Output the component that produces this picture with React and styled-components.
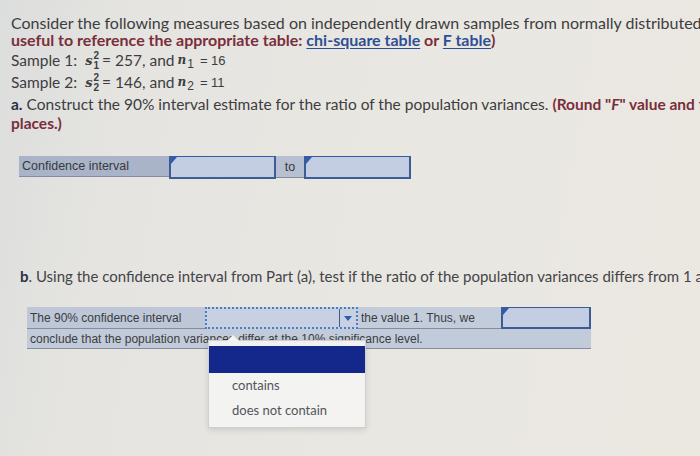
import React from "react";
import styled, { createGlobalStyle } from "styled-components";

const Global = createGlobalStyle`
  html, body { margin: 0; padding: 0; }
  body { background: #e7e5e0; }
`;

const Page = styled.div`
  width: 700px;
  height: 456px;
  overflow: hidden;
  position: relative;
  background: linear-gradient(100deg, #dcdedd 0%, #e5e4e0 18%, #e9e7e2 55%, #ebe8e2 100%);
  font-family: Lato, "Open Sans", sans-serif;
  color: #3d3d3f;
`;

const Question = styled.div`
  padding: 14px 0 0 11px;
  font-size: 16px;
  white-space: nowrap;
`;

const Line = styled.div`
  height: ${(p) => p.$h}px;
  line-height: ${(p) => p.$h}px;
  font-size: ${(p) => p.$fs || 16}px;
  display: flex;
  align-items: center;
`;

const Maroon = styled.span`
  font-weight: 700;
  color: #7a2e3b;
  white-space: pre;
`;

const Strong = styled.span`
  font-weight: 700;
  color: #2f3145;
`;

const Link = styled.span`
  font-weight: 700;
  color: #2f4f95;
  text-decoration: underline;
  text-underline-offset: 2px;
`;

const Plain = styled.span`
  white-space: pre;
`;

const Var = styled.span`
  display: inline-flex;
  align-items: center;
  font-family: "DejaVu Serif", serif;
  font-style: italic;
  font-weight: 700;
  font-size: ${(p) => p.$size || 13}px;
  margin: 0 ${(p) => p.$mr ?? 3}px 0 ${(p) => p.$ml ?? 4}px;
`;

const Scripts = styled.span`
  display: inline-flex;
  flex-direction: column;
  font-family: "Liberation Sans", sans-serif;
  font-style: normal;
  font-weight: 700;
  font-size: 10px;
  line-height: 10px;
  margin-left: 1px;
`;

const Sub = styled.span`
  font-family: "Liberation Sans", sans-serif;
  font-style: normal;
  font-weight: 400;
  font-size: 12px;
  position: relative;
  top: 4px;
  margin-left: 1px;
`;

const MathNum = styled.span`
  font-family: "Liberation Sans", sans-serif;
  font-size: 13px;
  white-space: pre;
  margin-left: 5px;
`;

const Table1 = styled.div`
  display: flex;
  align-items: flex-start;
  margin: 25px 0 0 19px;
  font-family: "Liberation Sans", Arial, sans-serif;
  font-size: 12.5px;
  color: #38393c;
`;

const Cell = styled.div`
  width: ${(p) => p.$w}px;
  height: ${(p) => p.$h || 21}px;
  background: ${(p) => p.$bg || "#a9b4c8"};
  border-bottom: 1px solid #858d9c;
  box-sizing: border-box;
  display: flex;
  align-items: center;
  justify-content: ${(p) => (p.$center ? "center" : "flex-start")};
  padding-left: ${(p) => (p.$center ? 0 : p.$pad ?? 3)}px;
  white-space: nowrap;
  overflow: hidden;
`;

const Input = styled.div`
  position: relative;
  width: ${(p) => p.$w}px;
  height: ${(p) => p.$h || 23}px;
  box-sizing: border-box;
  border: 2px solid #3d5b95;
  border-top-width: 1px;
  background: #c4cee3;
  &::before {
    content: "";
    position: absolute;
    left: 0;
    top: 0;
    border-top: 7px solid #2f5bb0;
    border-right: 6px solid transparent;
  }
`;

const PartB = styled.div`
  margin: 87px 0 0 20px;
  font-size: 15px;
  line-height: 20px;
  white-space: nowrap;
  color: #444448;
`;

const Table2 = styled.div`
  position: relative;
  margin: 21px 0 0 27px;
  width: 564px;
  font-family: "Liberation Sans", Arial, sans-serif;
  font-size: 12px;
  color: #3b3c40;
`;

const Row = styled.div`
  display: flex;
  align-items: flex-start;
`;

const Select = styled.div`
  width: ${(p) => p.$w}px;
  height: 22px;
  box-sizing: border-box;
  border: 2px dotted #4b7cc6;
  background: #c7d1e2;
  display: flex;
  justify-content: flex-end;
  align-items: stretch;
`;

const SelectArrow = styled.div`
  width: 16px;
  border-left: 1px solid #3d5b95;
  display: flex;
  align-items: center;
  justify-content: center;
  &::after {
    content: "";
    border-top: 5px solid #2f5bb0;
    border-left: 4px solid transparent;
    border-right: 4px solid transparent;
  }
`;

const Menu = styled.div`
  position: absolute;
  left: 181px;
  top: 33px;
  width: 158px;
  height: 88px;
  box-sizing: border-box;
  background: rgba(244, 244, 242, 0.96);
  border: 1px solid #cfcfcf;
  box-shadow: 0 2px 6px rgba(0, 0, 0, 0.12);
  padding-top: 5px;
  font-family: Lato, "Open Sans", sans-serif;
  font-size: 13px;
  color: #545458;
  &::before {
    content: "";
    position: absolute;
    left: 18px;
    top: -6px;
    border-bottom: 6px solid #f4f4f2;
    border-left: 6px solid transparent;
    border-right: 6px solid transparent;
  }
`;

const Highlight = styled.div`
  height: 27px;
  background: #14288c;
`;

const Option = styled.div`
  height: 25px;
  line-height: 25px;
  padding-left: 23px;
  white-space: nowrap;
`;

export default function App() {
  return (
    <Page>
      <Global />
      <Question>
        <Line $h={17}>
          <Plain>Consider the following measures based on independently drawn samples from normally distributed populations. (You may find it</Plain>
        </Line>
        <Line $h={18}>
          <Maroon>useful to reference the appropriate table: </Maroon>
          <Link>chi-square table</Link>
          <Maroon> or </Maroon>
          <Link>F table</Link>
          <Maroon>)</Maroon>
        </Line>
        <Line $h={23} $fs={15.5}>
          <Plain>Sample 1:</Plain>
          <Var $ml={8}>
            s
            <Scripts>
              <span>2</span>
              <span>1</span>
            </Scripts>
          </Var>
          <Plain>= 257, and</Plain>
          <Var $size={12} $ml={3} $mr={1}>
            n<Sub>1</Sub>
          </Var>
          <MathNum>= 16</MathNum>
        </Line>
        <Line $h={21} $fs={15.5}>
          <Plain>Sample 2:</Plain>
          <Var $ml={8}>
            s
            <Scripts>
              <span>2</span>
              <span>2</span>
            </Scripts>
          </Var>
          <Plain>= 146, and</Plain>
          <Var $size={12} $ml={3} $mr={1}>
            n<Sub>2</Sub>
          </Var>
          <MathNum>= 11</MathNum>
        </Line>
        <Line $h={22} $fs={15.5}>
          <Strong>a.</Strong>
          <Plain> Construct the 90% interval estimate for the ratio of the population variances. </Plain>
          <Maroon>
            (Round "<i>F</i>" value and final answers to 2 decimal
          </Maroon>
        </Line>
        <Line $h={16} $fs={15.5}>
          <Maroon>places.)</Maroon>
        </Line>
      </Question>

      <Table1>
        <Cell $w={150}>Confidence interval</Cell>
        <Input $w={107} />
        <Cell $w={28} $h={22} $bg="#b7c0d2" $center>
          to
        </Cell>
        <Input $w={107} />
      </Table1>

      <PartB>
        <Strong>b</Strong>
        <Plain>. Using the confidence interval from Part (a), test if the ratio of the population variances differs from 1 at the 10% significance level.</Plain>
      </PartB>

      <Table2>
        <Row>
          <Cell $w={178} $h={22} $bg="#bdc7d7">
            The 90% confidence interval
          </Cell>
          <Select $w={153}>
            <SelectArrow />
          </Select>
          <Cell $w={143} $h={22} $bg="#c3ccdb">
            the value 1. Thus, we
          </Cell>
          <Input $w={90} $h={22} />
        </Row>
        <Row>
          <Cell $w={564} $h={20} $bg="#c2cbda">
            conclude that the population variances differ at the 10% significance level.
          </Cell>
        </Row>
        <Menu>
          <Highlight />
          <Option>contains</Option>
          <Option>does not contain</Option>
        </Menu>
      </Table2>
    </Page>
  );
}
